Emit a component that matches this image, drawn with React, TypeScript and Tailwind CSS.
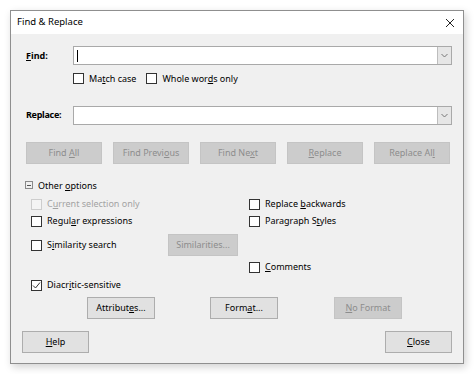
import React from 'react';

const font = { fontFamily: '"Noto Sans", "Open Sans", sans-serif' };

// underline one letter of a label (mnemonic)
const Mn = ({ text, at }: { text: string; at: number }) => (
  <span>
    {text.slice(0, at)}
    <span className="underline underline-offset-[1px]">{text[at]}</span>
    {text.slice(at + 1)}
  </span>
);

type CheckProps = { label: string; at: number; checked?: boolean; disabled?: boolean };

const Check = ({ label, at, checked, disabled }: CheckProps) => (
  <div className={`flex items-center gap-[5px] ${disabled ? 'text-[#a3a3a3]' : 'text-black'}`}>
    <span
      className={`flex items-center justify-center w-[11px] h-[11px] border ${
        disabled ? 'border-[#cdcdcd] bg-[#f4f4f4]' : 'border-[#333333] bg-white'
      }`}
    >
      {checked && (
        <svg width="9" height="9" viewBox="0 0 9 9">
          <path d="M1 4.5 L3.5 7 L8 1.5" fill="none" stroke="#333" strokeWidth="1" />
        </svg>
      )}
    </span>
    <Mn text={label} at={at} />
  </div>
);

type BtnProps = { label: string; at: number; w: string; disabled?: boolean };

const Btn = ({ label, at, w, disabled }: BtnProps) => (
  <div
    className={`${w} h-[22px] flex items-center justify-center border ${
      disabled ? 'bg-[#cccccc] border-[#c4c4c4] text-[#8d8d8d]' : 'bg-[#e1e1e1] border-[#adadad] text-black'
    }`}
  >
    {at >= 0 ? <Mn text={label} at={at} /> : <span>{label}</span>}
  </div>
);

const Combo = ({ caret }: { caret?: boolean }) => (
  <div className="flex w-[379px] h-[19px] border border-[#a9a9a9] bg-white">
    <div className="flex-1 flex items-center pl-[3px]">
      {caret && <span className="w-px h-[12px] bg-black" />}
    </div>
    <div className="w-[14px] h-full bg-[#e6e6e6] border-l border-[#bdbdbd] flex items-center justify-center">
      <svg width="7" height="5" viewBox="0 0 7 5">
        <path d="M0.5 1 L3.5 4 L6.5 1" fill="none" stroke="#777" strokeWidth="1" />
      </svg>
    </div>
  </div>
);

export default function App() {
  return (
    <div className="w-[474px] h-[374px] bg-white pl-[10px] pt-[10px]" style={font}>
      <div className="w-[454px] h-[354px] border border-[#8f8f8f] bg-[#f0f0f0] shadow-[2px_3px_8px_rgba(0,0,0,0.18)] flex flex-col text-[9px] text-black">
        {/* title bar */}
        <div className="h-[23px] bg-white flex items-center justify-between pl-[6px] pr-[8px] text-[9.5px]">
          <span>Find &amp; Replace</span>
          <svg width="10" height="10" viewBox="0 0 10 10">
            <path d="M1 1 L9 9 M9 1 L1 9" stroke="#222" strokeWidth="1" />
          </svg>
        </div>

        <div className="flex flex-col pl-[15px]">
          {/* find */}
          <div className="flex items-center mt-[12px]">
            <span className="w-[47px] font-bold">
              <Mn text="Find:" at={0} />
            </span>
            <Combo caret />
          </div>
          <div className="flex items-center gap-[10px] ml-[47px] mt-[7px]">
            <Check label="Match case" at={2} />
            <Check label="Whole words only" at={9} />
          </div>

          {/* replace */}
          <div className="flex items-center mt-[20px]">
            <span className="w-[47px] font-bold tracking-[-0.3px]">Replace:</span>
            <Combo />
          </div>

          {/* search buttons */}
          <div className="flex gap-[11px] mt-[17px]">
            <Btn label="Find All" at={5} w="w-[76px]" disabled />
            <Btn label="Find Previous" at={10} w="w-[76px]" disabled />
            <Btn label="Find Next" at={7} w="w-[76px]" disabled />
            <Btn label="Replace" at={0} w="w-[76px]" disabled />
            <Btn label="Replace All" at={10} w="w-[76px]" disabled />
          </div>

          {/* other options */}
          <div className="flex items-center gap-[5px] mt-[15px] -ml-[1px]">
            <span className="w-[8px] h-[8px] border border-[#8a8a8a] flex items-center justify-center">
              <span className="w-[4px] h-px bg-[#555]" />
            </span>
            <Mn text="Other options" at={6} />
          </div>

          <div className="flex mt-[4px] pl-[5px]">
            <div className="flex flex-col w-[218px]">
              <div className="h-[16px] flex items-center">
                <Check label="Current selection only" at={1} disabled />
              </div>
              <div className="h-[18px] flex items-center">
                <Check label="Regular expressions" at={5} />
              </div>
              <div className="h-[30px] flex items-center">
                <div className="w-[137px]">
                  <Check label="Similarity search" at={1} />
                </div>
                <div className="w-[70px] h-[22px] flex items-center justify-center bg-[#cccccc] border border-[#c4c4c4] text-[#8d8d8d]">
                  <span>Similarities...</span>
                </div>
              </div>
              <div className="h-[17px]" />
              <div className="h-[16px] flex items-center">
                <Check label="Diacritic-sensitive" at={5} checked />
              </div>
            </div>
            <div className="flex flex-col">
              <div className="h-[16px] flex items-center">
                <Check label="Replace backwards" at={8} />
              </div>
              <div className="h-[18px] flex items-center">
                <Check label="Paragraph Styles" at={11} />
              </div>
              <div className="h-[29px]" />
              <div className="h-[16px] flex items-center">
                <Check label="Comments" at={0} />
              </div>
            </div>
          </div>

          {/* attribute buttons */}
          <div className="flex mt-[4px] pl-[61px]">
            <Btn label="Attributes..." at={8} w="w-[68px]" />
            <div className="ml-[55px]">
              <Btn label="Format..." at={4} w="w-[68px]" />
            </div>
            <div className="ml-[56px]">
              <Btn label="No Format" at={0} w="w-[68px]" disabled />
            </div>
          </div>
        </div>

        {/* bottom buttons */}
        <div className="flex justify-between mt-[12px] pl-[11px] pr-[11px]">
          <Btn label="Help" at={0} w="w-[67px]" />
          <Btn label="Close" at={0} w="w-[67px]" />
        </div>
      </div>
    </div>
  );
}
